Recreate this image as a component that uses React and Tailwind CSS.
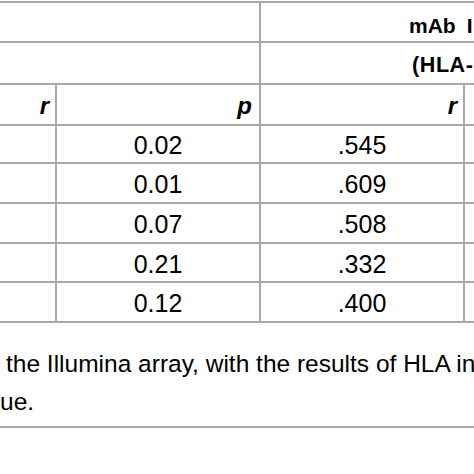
import * as React from "react"

// 잘린 표 스크린샷: 열 경계선과 행 높이는 픽셀 단위로 맞춤
const rows = [
  { p: "0.02", r: ".545", h: "h-[38px]" },
  { p: "0.01", r: ".609", h: "h-[40px]" },
  { p: "0.07", r: ".508", h: "h-[40px]" },
  { p: "0.21", r: ".332", h: "h-[39px]" },
  { p: "0.12", r: ".400", h: "h-[40px]" },
]

const line = "border-[#a9a9a9]"

export default function App() {
  return (
    <div className="h-[474px] w-[474px] overflow-hidden bg-white text-black [font-family:'Liberation_Sans',Arial,sans-serif]">
      <div className="mt-[1px] w-[640px] border-t-2 border-[#a9a9a9]">
        {/* 헤더 1 */}
        <div className="flex h-[40px] border-b-2 border-[#a9a9a9]">
          <div className="w-[261px] border-r-2 border-[#a9a9a9]" />
          <div className="flex flex-1 items-center pl-[148px] pt-[7px] text-[21px] font-bold">
            <span>mAb</span>
            <span className="ml-[11px]">I</span>
          </div>
        </div>
        {/* 헤더 2 */}
        <div className="flex h-[42px] border-b-2 border-[#a9a9a9]">
          <div className="w-[261px] border-r-2 border-[#a9a9a9]" />
          <div className="flex flex-1 items-center pl-[151px] pt-[5px] text-[21.5px] font-bold tracking-[0.6px]">(HLA-</div>
        </div>
        {/* 헤더 3 */}
        <div className="flex h-[41px] border-b-2 border-[#a9a9a9] text-[24px] font-bold italic">
          <div className="flex w-[57px] items-center justify-end border-r-2 border-[#a9a9a9] pr-[6px] pt-[3px]">r</div>
          <div className="flex w-[204px] items-center justify-end border-r-2 border-[#a9a9a9] pr-[7px] pt-[3px]">p</div>
          <div className="flex w-[204px] items-center justify-end border-r-2 border-[#a9a9a9] pr-[6px] pt-[3px]">r</div>
          <div className="flex-1" />
        </div>
        {rows.map((row) => (
          <div key={row.p + row.r} className={`flex ${row.h} border-b-2 ${line} text-[25px]`}>
            <div className={`w-[57px] border-r-2 ${line}`} />
            <div className={`flex w-[204px] items-center justify-center border-r-2 ${line} pt-[4px]`}>{row.p}</div>
            <div className={`flex w-[204px] items-center justify-center border-r-2 ${line} pt-[4px]`}>{row.r}</div>
            <div className="flex-1" />
          </div>
        ))}
        {/* 각주 */}
        <div className="border-b-2 border-[#a9a9a9] pb-[5px] pt-[22px] text-[24.5px] leading-[38px]">
          <div className="whitespace-nowrap pl-[6px]">the Illumina array, with the results of HLA in</div>
          <div className="whitespace-nowrap">ue.</div>
        </div>
      </div>
    </div>
  )
}
